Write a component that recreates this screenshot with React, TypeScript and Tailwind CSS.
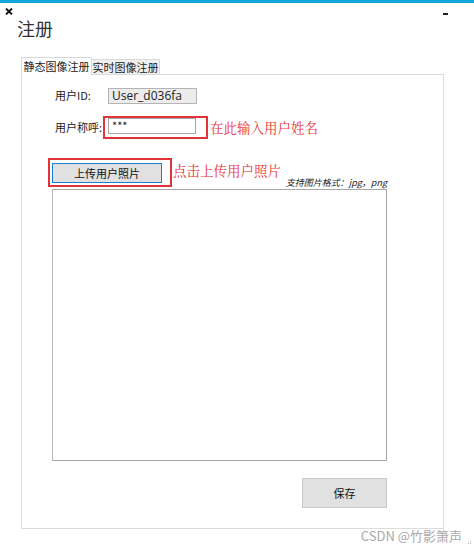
import React from "react";

const uiFont = {
  fontFamily: '"Noto Sans CJK SC", "Noto Sans", sans-serif',
};

// Red hand-drawn callout text next to the form fields
const Callout = ({ children }: { children: React.ReactNode }) => (
  <span
    className="block text-[13.5px] leading-none text-[#e8363c] whitespace-nowrap"
    style={{ fontFamily: '"Noto Serif CJK SC", "Noto Sans CJK SC", serif' }}
  >
    {children}
  </span>
);

const RegisterWindow = () => {
  return (
    <div
      className="relative w-[474px] h-[547px] bg-white overflow-hidden text-[#1a1a1a]"
      style={uiFont}
    >
      <div className="h-[3px] bg-[#16a8dc]" />

      {/* window controls */}
      <div className="flex justify-between items-start h-[12px] pl-[5px] pr-[26px] pt-[5px]">
        <svg width="8" height="7" viewBox="0 0 8 7">
          <path d="M1 0.5 L7 6.5 M7 0.5 L1 6.5" stroke="#111" strokeWidth="1.8" />
        </svg>
        <div className="w-[5px] h-[2px] bg-[#222] mt-[5px]" />
      </div>

      <h1 className="pl-[17px] pt-[2px] text-[18px] leading-[22px] text-[#333] font-normal">注册</h1>

      {/* tabs */}
      <div className="flex items-end ml-[21px] mt-[17px] h-[18px]">
        <div className="h-[18px] w-[71px] bg-white border border-b-0 border-[#d9d9d9] text-[11px] leading-[16px] text-center text-[#222] relative top-[1px] z-10">
          静态图像注册
        </div>
        <div className="h-[15px] w-[68px] bg-[#f0f0f0] border border-l-0 border-b-0 border-[#d9d9d9] text-[11px] leading-[14px] text-center text-[#222]">
          实时图像注册
        </div>
      </div>

      {/* tab panel */}
      <div className="ml-[21px] w-[423px] h-[455px] border border-[#dcdcdc] pl-[30px] pt-[13px]">
        <div className="w-[335px] flex flex-col">
          <div className="flex items-center h-[15px]">
            <span className="ml-[3px] w-[53px] text-[11px] leading-none">用户ID:</span>
            <div
              className="w-[89px] h-[16px] bg-[#ececec] border border-[#b4b4b4] text-[12px] leading-[14px] pl-[3px] text-[#222]"
              style={{ fontFamily: '"Open Sans", "Noto Sans", sans-serif' }}
            >
              User_d036fa
            </div>
          </div>

          <div className="flex items-center mt-[13px] h-[23px]">
            <span className="ml-[3px] w-[48px] text-[11px] leading-none">用户称呼:</span>
            <div className="flex border-2 border-[#e0333a] pl-[3px] pr-[10px] pb-[3px]">
              <div className="w-[88px] h-[16px] bg-white border border-[#a8a8a8] text-[11px] leading-[13px] pl-[3px]">
                ***
              </div>
            </div>
            <div className="ml-[2px]">
              <Callout>在此输入用户姓名</Callout>
            </div>
          </div>

          <div className="flex items-center mt-[19px] -ml-[4px] h-[29px]">
            <div className="flex border-2 border-[#e0333a] pl-[2px] pr-[8px] pt-[3px] pb-[2px]">
              <button className="block w-[110px] h-[20px] bg-[#e1e1e1] border border-[#1a7fd4] text-[11px] leading-none text-[#111]">
                上传用户照片
              </button>
            </div>
            <div className="ml-[1px] mb-[4px]">
              <Callout>点击上传用户照片</Callout>
            </div>
            <span className="ml-auto self-end mb-[-1px] text-[9px] italic leading-[10px] text-[#222] whitespace-nowrap">
              支持图片格式：jpg，png
            </span>
          </div>

          {/* photo preview */}
          <div className="mt-[2px] w-[335px] h-[272px] border border-[#a6a6a6] border-l-[#b9b9b9] bg-white" />

          <button className="block self-end mt-[17px] w-[85px] h-[30px] bg-[#e1e1e1] border border-[#c9c9c9] text-[11px] text-[#111]">
            保存
          </button>
        </div>
      </div>

      {/* blog watermark */}
      <div
        className="absolute right-[12px] bottom-[5px] text-[13px] leading-none text-[#a9a9a9]"
        style={{ textShadow: "0 0 1px #fff" }}
      >
        CSDN @竹影箫声
      </div>
      <div className="absolute right-[3px] bottom-[3px] grid grid-cols-2 gap-[1px]">
        <span className="w-[1px] h-[1px] bg-[#bbb] col-start-2" />
        <span className="w-[1px] h-[1px] bg-[#bbb]" />
        <span className="w-[1px] h-[1px] bg-[#bbb]" />
      </div>
    </div>
  );
};

export default function App() {
  return <RegisterWindow />;
}
